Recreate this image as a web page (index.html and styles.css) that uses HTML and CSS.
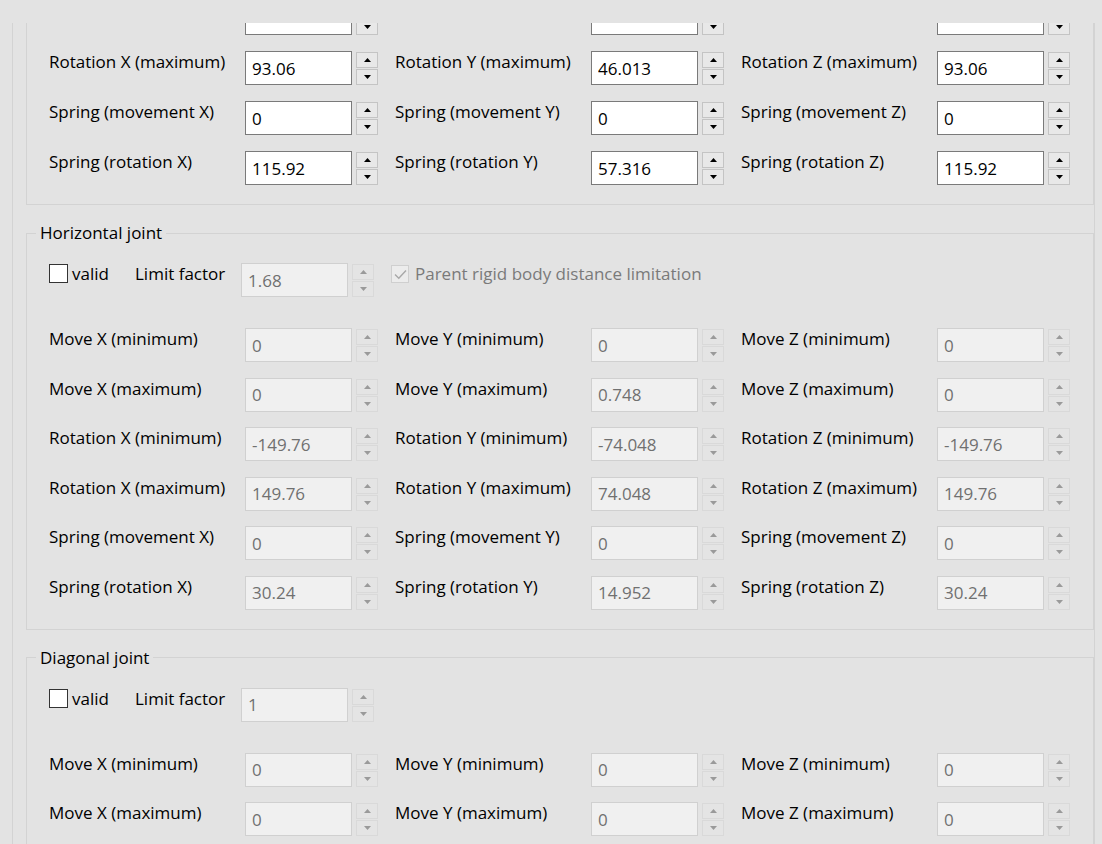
FILE: index.html
```html
<!DOCTYPE html>
<html lang="en">
<head>
    <meta charset="UTF-8">
    <title>Joint settings</title>
    <link rel="stylesheet" href="styles.css">
</head>
<body>
    <div class="viewport">
        <div class="content">
            <fieldset class="group group-top">
                <div class="grid grid-wide" id="topGrid"></div>
            </fieldset>

            <fieldset class="group">
                <legend>Horizontal joint</legend>
                <div class="check-row">
                    <label class="check check-valid"><span class="box"></span>valid</label>
                    <label class="factor">Limit factor</label>
                    <div class="spin" data-value="1.68" data-disabled="1"></div>
                    <label class="check check-disabled"><span class="box checked"><svg width="13" height="11" viewBox="0 0 13 11"><path d="M1 5.5 L4.8 9.2 L12 1.5" fill="none" stroke="currentColor" stroke-width="1.4"/></svg></span>Parent rigid body distance limitation</label>
                </div>
                <div class="grid" id="horizontalGrid"></div>
            </fieldset>

            <fieldset class="group">
                <legend>Diagonal joint</legend>
                <div class="check-row">
                    <label class="check check-valid"><span class="box"></span>valid</label>
                    <label class="factor">Limit factor</label>
                    <div class="spin" data-value="1" data-disabled="1"></div>
                </div>
                <div class="grid" id="diagonalGrid"></div>
            </fieldset>
        </div>
    </div>

    <script>
        const arrowUp = '<svg width="7" height="4" viewBox="0 0 7 4"><path d="M0 4 L3.5 0 L7 4 Z" fill="currentColor"/></svg>';
        const arrowDown = '<svg width="7" height="4" viewBox="0 0 7 4"><path d="M0 0 L7 0 L3.5 4 Z" fill="currentColor"/></svg>';

        function spinHtml(value, disabled) {
            const dis = disabled ? ' disabled' : '';
            return `<input type="text" value="${value}"${dis}>` +
                `<div class="arrows"><button${dis}>${arrowUp}</button><button${dis}>${arrowDown}</button></div>`;
        }

        function fillGrid(id, rows, disabled) {
            const grid = document.getElementById(id);
            for (const row of rows) {
                for (const [label, value] of row) {
                    const field = document.createElement('div');
                    field.className = 'field';
                    field.innerHTML = `<label>${label}</label><div class="spin">${spinHtml(value, disabled)}</div>`;
                    grid.appendChild(field);
                }
            }
        }

        // spin boxes written straight into the markup
        document.querySelectorAll('.check-row .spin').forEach(el => {
            el.innerHTML = spinHtml(el.dataset.value, el.dataset.disabled === '1');
        });

        fillGrid('topGrid', [
            [['', ''], ['', ''], ['', '']],
            [['Rotation X (maximum)', '93.06'], ['Rotation Y (maximum)', '46.013'], ['Rotation Z (maximum)', '93.06']],
            [['Spring (movement X)', '0'], ['Spring (movement Y)', '0'], ['Spring (movement Z)', '0']],
            [['Spring (rotation X)', '115.92'], ['Spring (rotation Y)', '57.316'], ['Spring (rotation Z)', '115.92']]
        ], false);

        fillGrid('horizontalGrid', [
            [['Move X (minimum)', '0'], ['Move Y (minimum)', '0'], ['Move Z (minimum)', '0']],
            [['Move X (maximum)', '0'], ['Move Y (maximum)', '0.748'], ['Move Z (maximum)', '0']],
            [['Rotation X (minimum)', '-149.76'], ['Rotation Y (minimum)', '-74.048'], ['Rotation Z (minimum)', '-149.76']],
            [['Rotation X (maximum)', '149.76'], ['Rotation Y (maximum)', '74.048'], ['Rotation Z (maximum)', '149.76']],
            [['Spring (movement X)', '0'], ['Spring (movement Y)', '0'], ['Spring (movement Z)', '0']],
            [['Spring (rotation X)', '30.24'], ['Spring (rotation Y)', '14.952'], ['Spring (rotation Z)', '30.24']]
        ], true);

        fillGrid('diagonalGrid', [
            [['Move X (minimum)', '0'], ['Move Y (minimum)', '0'], ['Move Z (minimum)', '0']],
            [['Move X (maximum)', '0'], ['Move Y (maximum)', '0'], ['Move Z (maximum)', '0']]
        ], true);
    </script>
</body>
</html>
```

FILE: styles.css
```css
* {
    box-sizing: border-box;
}

body {
    margin: 0;
    background-color: #e3e3e3;
    font-family: "Open Sans", "Noto Sans", sans-serif;
    font-size: 17px;
    color: #000;
    overflow: hidden;
}

.viewport {
    margin: 23px 0 0 12px;
    width: 1083px;
    height: 821px;
    border-left: 1px solid #d3d3d3;
    border-right: 1px solid #d3d3d3;
    overflow: hidden;
}

.content {
    padding-left: 13px;
}

.group {
    margin: 0 0 16px;
    padding: 18px 22px 19px;
    border: 1px solid #d3d3d3;
    min-width: 0;
}

.group legend {
    margin-left: -13px;
    padding: 0 4px;
    line-height: 24px;
}

.group-top {
    margin-top: -22px;
    margin-bottom: 16px;
    padding-top: 0;
    border-top: none;
    padding-bottom: 19px;
}

.grid {
    display: grid;
    grid-template-columns: repeat(3, 329px);
    column-gap: 17px;
    row-gap: 15.5px;
}

.grid-wide {
    row-gap: 16px;
}

.field {
    display: flex;
    align-items: flex-start;
}

.field label {
    width: 196px;
    flex: none;
    margin-top: -1px;
    line-height: 24px;
    white-space: nowrap;
}

.spin {
    display: flex;
    flex: none;
}

.spin input {
    width: 107px;
    height: 34px;
    margin: 0;
    padding: 0 0 0 6px;
    border: 1px solid #7a7a7a;
    background-color: #fff;
    font: inherit;
    color: #000;
    outline: none;
}

.spin input:disabled {
    border-color: #d0d0d0;
    background-color: #f0f0f0;
    color: #707070;
}

.arrows {
    display: flex;
    flex-direction: column;
    gap: 1px;
    margin: 1px 0 0 4px;
}

.arrows button {
    width: 22px;
    height: 16px;
    padding: 0;
    border: 1px solid #c4c4c4;
    background-color: #e8e8e8;
    color: #000;
    display: flex;
    align-items: center;
    justify-content: center;
}

.arrows button:disabled {
    border-color: #d9d9d9;
    background-color: #e4e4e4;
    color: #9a9a9a;
}

.check-row {
    display: flex;
    align-items: flex-start;
    margin-bottom: 31px;
}

.check {
    display: flex;
    align-items: flex-start;
    margin-top: -1px;
    line-height: 24px;
    white-space: nowrap;
}

.check-valid {
    width: 86px;
    flex: none;
}

.check .box {
    width: 19px;
    height: 19px;
    margin: 2px 4px 0 0;
    border: 1px solid #333;
    background-color: #fff;
    display: flex;
    align-items: center;
    justify-content: center;
}

.check-disabled {
    margin-left: 17px;
    color: #7a7a7a;
}

.check-disabled .box {
    width: 18px;
    height: 18px;
    margin-top: 3px;
    margin-right: 6px;
    border-color: #cfcfcf;
    background-color: #ececec;
    color: #a8a8a8;
}

.factor {
    width: 106px;
    flex: none;
    margin-top: -1px;
    line-height: 24px;
}
```
